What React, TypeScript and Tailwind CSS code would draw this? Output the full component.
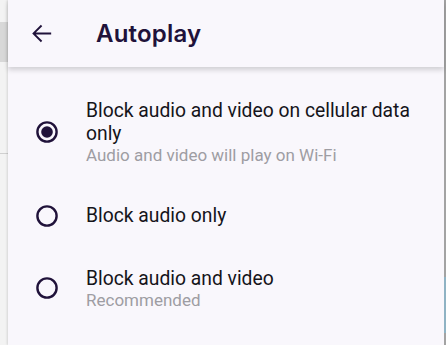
import { useState } from 'react'

const options = [
  { id: 'cellular', title: 'Block audio and video on cellular data only', summary: 'Audio and video will play on Wi-Fi' },
  { id: 'audio', title: 'Block audio only', summary: '' },
  { id: 'all', title: 'Block audio and video', summary: 'Recommended' },
]

function Radio({ checked }: { checked: boolean }) {
  return (
    <svg width="24" height="24" viewBox="0 0 24 24" className="shrink-0">
      <circle cx="12" cy="12" r="9.6" fill="none" stroke="#20123a" strokeWidth="2.4" />
      {checked && <circle cx="12" cy="12" r="5.8" fill="#20123a" />}
    </svg>
  )
}

export default function App() {
  const [selected, setSelected] = useState('cellular')

  return (
    <div className="flex h-[345px] w-[446px] overflow-hidden bg-[#f3f3f3]" style={{ fontFamily: 'Roboto, "Noto Sans", sans-serif' }}>
      {/* page behind the sheet */}
      <div className="flex w-[8px] shrink-0 flex-col">
        <div className="h-[22px]" />
        <div className="h-[40px] bg-[#d8d8d8]" />
        <div className="h-[91px]" />
        <div className="h-px bg-[#d0d0d0]" />
      </div>

      <div className="flex min-w-0 flex-1 flex-col bg-[#f9f7fc] shadow-[-1px_0_2px_rgba(0,0,0,0.12)]">
        <header className="relative z-10 flex h-[67px] shrink-0 items-center bg-[#f9f7fc] shadow-[0_3px_5px_rgba(0,0,0,0.16)]">
          <button className="ml-[19px] flex h-[29px] w-[29px] items-center justify-center">
            <svg width="29" height="29" viewBox="0 0 24 24" fill="#20123a">
              <path d="M20 11.2H7.3l5.3-5.3-1.1-1.1L4.3 12l7.2 7.2 1.1-1.1-5.3-5.3H20z" />
            </svg>
          </button>
          <h1 className="ml-[40px] text-[24px] font-semibold tracking-[0.2px] text-[#20123a]" style={{ fontFamily: 'Inter, "Open Sans", sans-serif' }}>
            Autoplay
          </h1>
        </header>

        <div className="flex flex-col pt-[12px]">
          {options.map(o => (
            <button key={o.id} onClick={() => setSelected(o.id)} className="flex items-center py-[19.5px] pr-[20px] text-left">
              <div className="flex w-[78px] shrink-0 justify-center">
                <Radio checked={selected === o.id} />
              </div>
              <div className="flex flex-col">
                <span className="text-[19.3px] leading-[23px] text-[#15141a]">{o.title}</span>
                {o.summary && <span className="text-[17px] leading-[20px] text-[#9e9da3]">{o.summary}</span>}
              </div>
            </button>
          ))}
        </div>
      </div>

      <div className="flex w-[2px] shrink-0 flex-col bg-[#a3a3a3]">
        <div className="h-[277px]" />
        <div className="h-[56px] bg-[#8fb3c4]" />
      </div>
    </div>
  )
}
